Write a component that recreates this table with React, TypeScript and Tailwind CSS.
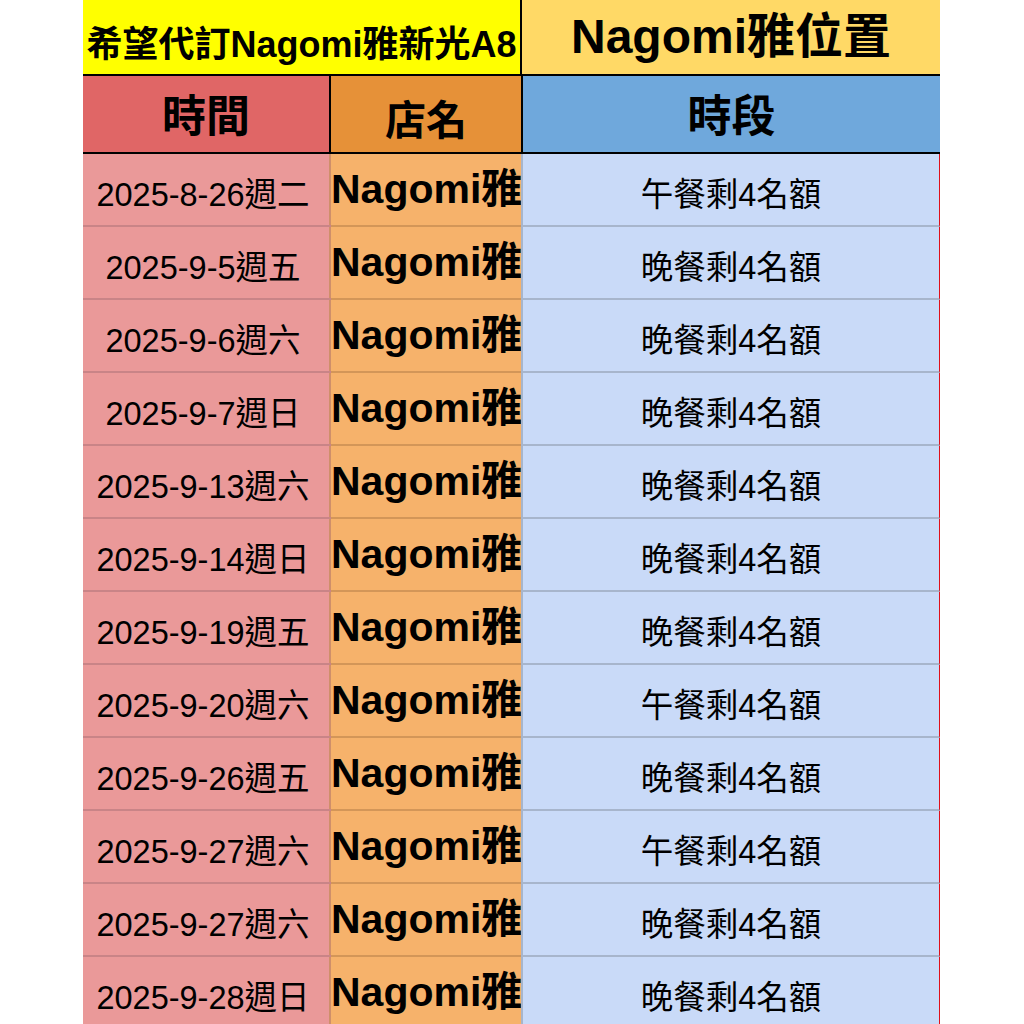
import React from "react";

const rows = [
  { date: "2025-8-26週二", slot: "午餐剩4名額" },
  { date: "2025-9-5週五", slot: "晚餐剩4名額" },
  { date: "2025-9-6週六", slot: "晚餐剩4名額" },
  { date: "2025-9-7週日", slot: "晚餐剩4名額" },
  { date: "2025-9-13週六", slot: "晚餐剩4名額" },
  { date: "2025-9-14週日", slot: "晚餐剩4名額" },
  { date: "2025-9-19週五", slot: "晚餐剩4名額" },
  { date: "2025-9-20週六", slot: "午餐剩4名額" },
  { date: "2025-9-26週五", slot: "晚餐剩4名額" },
  { date: "2025-9-27週六", slot: "午餐剩4名額" },
  { date: "2025-9-27週六", slot: "晚餐剩4名額" },
  { date: "2025-9-28週日", slot: "晚餐剩4名額" },
];

export default function App() {
  return (
    <div className="min-h-screen bg-white font-['Liberation_Sans','Noto_Sans_CJK_TC',sans-serif] text-black">
      <div className="ml-[83px] w-[857px]">
        {/* title row */}
        <div className="flex h-[76px] border-b-2 border-black">
          <div className="flex w-[437px] items-center justify-center whitespace-nowrap bg-[#ffff00] pt-[16px] text-[36px] font-bold leading-none">
            希望代訂Nagomi雅新光A8
          </div>
          <div className="w-[2px] bg-black" />
          <div className="flex flex-1 items-center justify-center whitespace-nowrap bg-[#ffd966] text-[48px] font-bold leading-none">
            Nagomi雅位置
          </div>
        </div>

        {/* column headers */}
        <div className="flex h-[78px] border-b-2 border-black">
          <div className="flex w-[246px] items-center justify-center bg-[#e06666] pt-[6px] text-[44px] font-bold leading-none">
            時間
          </div>
          <div className="w-[2px] bg-black" />
          <div className="flex w-[190px] items-center justify-center bg-[#e69138] pt-[14px] text-[41px] font-bold leading-none">
            店名
          </div>
          <div className="w-[2px] bg-black" />
          <div className="flex flex-1 items-center justify-center bg-[#6fa8dc] pt-[6px] text-[44px] font-bold leading-none">
            時段
          </div>
        </div>

        {/* data rows */}
        {rows.map((r, i) => (
          <div key={i} className="flex h-[73px]">
            <div className="flex w-[246px] items-center justify-center whitespace-nowrap border-b-2 border-[#c98487] bg-[#ea9999] pt-[12px] pr-[6px] text-[32.5px] leading-none">
              {r.date}
            </div>
            <div className="w-[2px] border-b-2 border-[#c98487] bg-[#cf8f6a]" />
            <div className="flex w-[190px] items-center overflow-hidden whitespace-nowrap border-b-2 border-[#d39658] bg-[#f6b26b] text-[41px] font-bold leading-none">
              Nagomi雅
            </div>
            <div className="w-[2px] border-b-2 border-[#a7b5cc] bg-[#a7b5cc]" />
            <div className="flex flex-1 items-center justify-center whitespace-nowrap border-b-2 border-r border-b-[#a7b5cc] border-r-[#e0101a] bg-[#c9daf8] pt-[12px] text-[32.5px] leading-none">
              {r.slot}
            </div>
          </div>
        ))}
      </div>
    </div>
  );
}
